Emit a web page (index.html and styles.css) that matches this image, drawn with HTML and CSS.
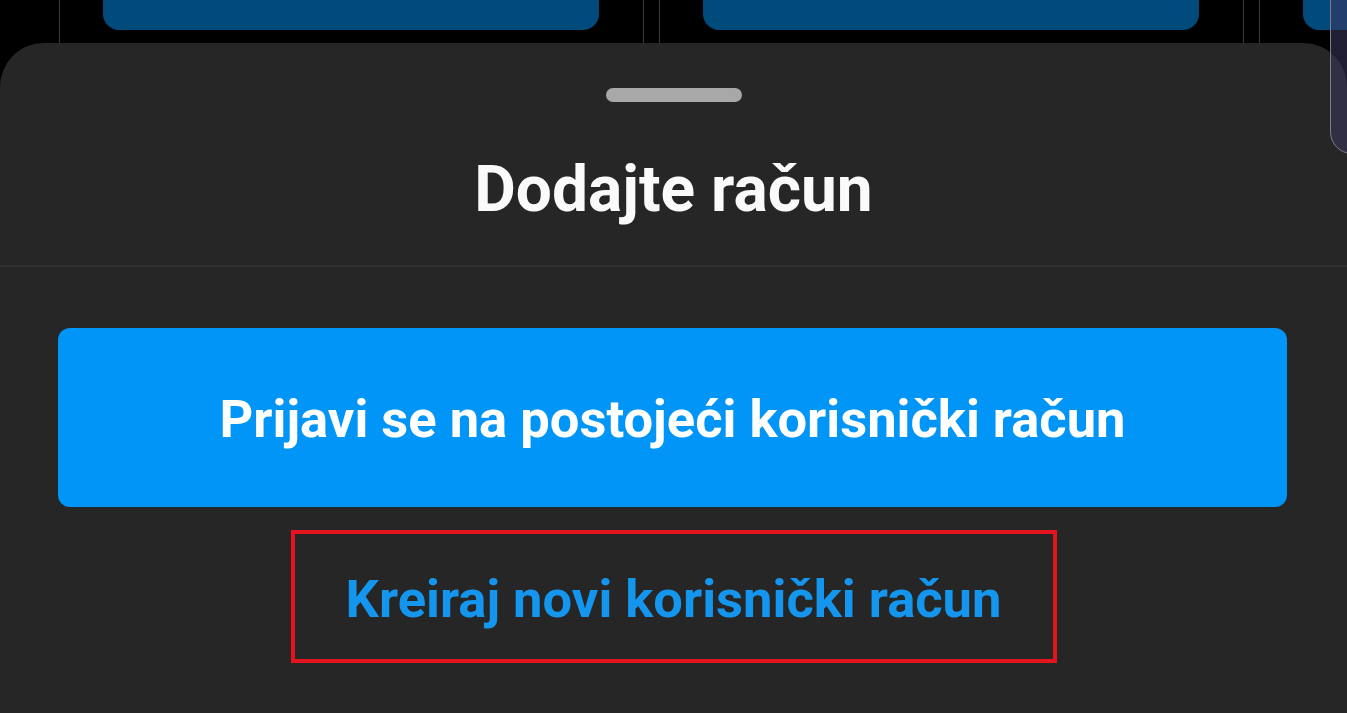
FILE: index.html
```html
<!DOCTYPE html>
<html lang="hr">
<head>
<meta charset="utf-8">
<title>Dodajte račun</title>
<link rel="stylesheet" href="styles.css">
</head>
<body>
<div class="screen">
  <div class="grid-strip">
    <div class="cell"><div class="card"></div></div>
    <div class="cell"><div class="card"></div></div>
    <div class="cell"><div class="card"></div></div>
  </div>
  <div class="side-panel"></div>
  <div class="sheet">
    <div class="handle"></div>
    <h1 class="sheet-title">Dodajte račun</h1>
    <div class="divider"></div>
    <div class="actions">
      <button class="btn-primary">Prijavi se na postojeći korisnički račun</button>
      <div class="highlight">
        <button class="btn-link">Kreiraj novi korisnički račun</button>
      </div>
    </div>
  </div>
</div>
</body>
</html>
```
FILE: styles.css
```css
* { box-sizing: border-box; }
html, body {
  margin: 0;
  padding: 0;
  background: #000;
  width: 1347px;
  height: 713px;
  overflow: hidden;
  font-family: Roboto, "Noto Sans", "Liberation Sans", sans-serif;
}
.screen {
  position: relative;
  width: 1347px;
  height: 713px;
  display: flex;
  flex-direction: column;
  overflow: hidden;
}
.grid-strip {
  display: flex;
  gap: 15px;
  padding-left: 59px;
  height: 43px;
  flex: none;
}
.cell {
  flex: none;
  width: 585px;
  height: 43px;
  border-left: 1px solid #3a3a3a;
  border-right: 1px solid #3a3a3a;
  padding: 0 44px 0 43px;
}
.card {
  height: 30px;
  background: #004a7c;
  border-radius: 0 0 16px 16px;
}
.side-panel {
  position: absolute;
  left: 1330px;
  top: -40px;
  width: 60px;
  height: 194px;
  border: 1.5px solid #7d7c88;
  border-radius: 22px;
  background: rgba(58, 54, 92, 0.55);
  z-index: 2;
}
.sheet {
  flex: 1;
  background: #262626;
  border-radius: 44px 44px 0 0;
  display: flex;
  flex-direction: column;
  align-items: stretch;
}
.handle {
  align-self: center;
  width: 136px;
  height: 14px;
  margin-top: 45px;
  margin-left: 1px;
  border-radius: 7px;
  background: #a8a8a8;
}
.sheet-title {
  margin: 56px 0 0;
  height: 64px;
  font-size: 64px;
  line-height: 64px;
  font-weight: 700;
  color: #fafafa;
  text-align: center;
}
.divider {
  margin-top: 43px;
  height: 2px;
  background: #303030;
}
.actions {
  display: flex;
  flex-direction: column;
  align-items: center;
  padding: 61px 60px 0 58px;
}
.btn-primary {
  width: 100%;
  height: 179px;
  border: none;
  border-radius: 12px;
  background: #0095f6;
  color: #fff;
  font-family: inherit;
  font-size: 52.5px;
  font-weight: 700;
  padding-top: 4px;
}
.highlight {
  margin-top: 23px;
  width: 766px;
  height: 133px;
  border: 4px solid #e3141d;
  display: flex;
  align-items: center;
  justify-content: center;
  margin-left: 2px;
}
.btn-link {
  border: none;
  background: none;
  color: #1596ee;
  font-family: inherit;
  font-size: 52.5px;
  font-weight: 700;
  padding: 4px 0 0;
}
```
